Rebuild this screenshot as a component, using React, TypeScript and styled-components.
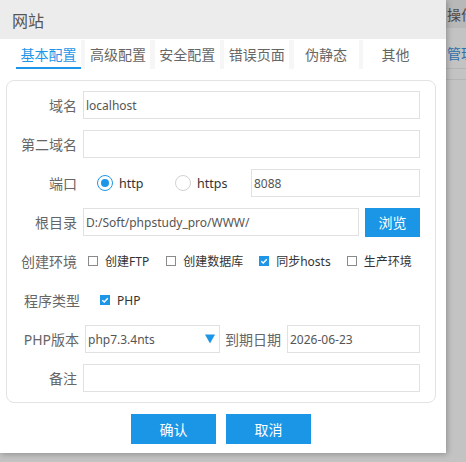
import React from "react";
import styled, { createGlobalStyle } from "styled-components";

const GlobalStyle = createGlobalStyle`
  html, body { margin: 0; padding: 0; }
  body {
    background: #c3c3c3;
    font-family: "Noto Sans", "Noto Sans CJK SC", sans-serif;
    -webkit-font-smoothing: antialiased;
  }
  * { box-sizing: border-box; }
`;

const Page = styled.div`
  position: relative;
  width: 466px;
  height: 462px;
  overflow: hidden;
  background: #c3c3c3;
`;

const BgHeader = styled.div`
  height: 28px;
  background: #b8b8b8;
  padding-left: 447px;
  display: flex;
  align-items: center;
  color: #4a4a4a;
  font-size: 14px;
  white-space: nowrap;
`;

const BgRow = styled.div<{ $h: number }>`
  height: ${(p) => p.$h}px;
  padding-left: 447px;
  display: flex;
  align-items: center;
  padding-top: 10px;
  color: #2d6fae;
  font-size: 14px;
  white-space: nowrap;
  border-bottom: 1px solid #b4b4b4;
`;

const Dialog = styled.div`
  position: absolute;
  left: 0;
  top: 0;
  width: 446px;
  height: 453px;
  background: #fff;
  box-shadow: 1px 1px 6px rgba(0, 0, 0, 0.28);
  display: flex;
  flex-direction: column;
`;

const TitleBar = styled.div`
  height: 39px;
  background: #ececec;
  padding-left: 12px;
  display: flex;
  align-items: center;
  font-size: 16px;
  color: #555;
`;

const TabStrip = styled.div`
  padding: 1px 0 0 16px;
  display: flex;
`;

const TabList = styled.div`
  display: flex;
  gap: 4.4px;
  background: #f6f6f6;
`;

const Tab = styled.div<{ $active?: boolean }>`
  width: 65px;
  height: 29px;
  background: #fff;
  display: flex;
  align-items: center;
  justify-content: center;
  font-size: 14px;
  color: ${(p) => (p.$active ? "#1e96e8" : "#666")};
  border-bottom: 2px solid ${(p) => (p.$active ? "#1e96e8" : "transparent")};
  padding-top: 1px;
`;

const Fieldset = styled.div`
  margin: 11px 10px 0 6px;
  border: 1px solid #e3e3e3;
  border-radius: 8px;
  padding: 10px 15px 10px 0;
  display: flex;
  flex-direction: column;
  gap: 11px;
`;

const Row = styled.div`
  height: 28px;
  display: flex;
  align-items: center;
  gap: 6px;
`;

const Label = styled.div<{ $w?: number }>`
  width: ${(p) => p.$w ?? 70}px;
  flex: none;
  text-align: right;
  font-size: 14px;
  color: #666;
  white-space: nowrap;
`;

const Field = styled.div<{ $w?: number }>`
  height: 28px;
  ${(p) => (p.$w ? `width: ${p.$w}px; flex: none;` : "flex: 1;")}
  border: 1px solid #e1e1e1;
  padding: 0 2px;
  display: flex;
  align-items: center;
  font-size: 12px;
  color: #555;
  white-space: nowrap;
  position: relative;
`;

const Arrow = styled.svg`
  position: absolute;
  right: 4px;
  top: 8px;
`;

const BlueButton = styled.div<{ $w: number; $h: number }>`
  width: ${(p) => p.$w}px;
  height: ${(p) => p.$h}px;
  flex: none;
  background: #1b96e6;
  color: #fff;
  font-size: 14px;
  display: flex;
  align-items: center;
  justify-content: center;
`;

const Options = styled.div<{ $ml: number }>`
  display: flex;
  align-items: center;
  margin-left: ${(p) => p.$ml}px;
`;

const Option = styled.div<{ $ml?: number; $w?: number; $gap: number; $size: number }>`
  display: flex;
  align-items: center;
  gap: ${(p) => p.$gap}px;
  margin-left: ${(p) => p.$ml ?? 0}px;
  ${(p) => (p.$w ? `width: ${p.$w}px;` : "")}
  font-size: ${(p) => p.$size}px;
  color: #333;
  white-space: nowrap;
`;

const RadioCircle = styled.span<{ $on?: boolean }>`
  width: 16px;
  height: 16px;
  flex: none;
  border-radius: 50%;
  border: 1px solid ${(p) => (p.$on ? "#1e96e8" : "#d2d2d2")};
  display: flex;
  align-items: center;
  justify-content: center;
  &::after {
    content: "";
    width: 8px;
    height: 8px;
    border-radius: 50%;
    background: ${(p) => (p.$on ? "#1e96e8" : "transparent")};
  }
`;

const Box = styled.span<{ $on?: boolean }>`
  width: 10px;
  height: 10px;
  flex: none;
  border: 1px solid ${(p) => (p.$on ? "#1e96e8" : "#8a8a8a")};
  background: ${(p) => (p.$on ? "#1e96e8" : "#fff")};
  display: flex;
  align-items: center;
  justify-content: center;
`;

const Footer = styled.div`
  display: flex;
  justify-content: center;
  gap: 10px;
  margin-top: 11px;
  padding-right: 4px;
`;

const Check = ({ on }: { on?: boolean }) => (
  <Box $on={on}>
    {on && (
      <svg width="8" height="8" viewBox="0 0 8 8">
        <path d="M1.3 4.2 L3.2 6 L6.8 2.2" stroke="#fff" strokeWidth="1.4" fill="none" />
      </svg>
    )}
  </Box>
);

const tabs = ["基本配置", "高级配置", "安全配置", "错误页面", "伪静态", "其他"];

export default function App() {
  return (
    <Page>
      <GlobalStyle />
      <BgHeader>操作</BgHeader>
      <BgRow $h={41}>管理</BgRow>
      <BgRow $h={9} />
      <Dialog>
        <TitleBar>网站</TitleBar>
        <TabStrip>
          <TabList>
            {tabs.map((t, i) => (
              <Tab key={t} $active={i === 0}>
                {t}
              </Tab>
            ))}
          </TabList>
        </TabStrip>
        <Fieldset>
          <Row>
            <Label>域名</Label>
            <Field>localhost</Field>
          </Row>
          <Row>
            <Label>第二域名</Label>
            <Field />
          </Row>
          <Row>
            <Label>端口</Label>
            <Options $ml={14}>
              <Option $w={78} $gap={6} $size={12.5}>
                <RadioCircle $on />
                http
              </Option>
              <Option $gap={6} $size={12.5}>
                <RadioCircle />
                https
              </Option>
            </Options>
            <Field $w={169} style={{ marginLeft: "auto" }}>8088</Field>
          </Row>
          <Row>
            <Label>根目录</Label>
            <Field>D:/Soft/phpstudy_pro/WWW/</Field>
            <BlueButton $w={55} $h={29}>浏览</BlueButton>
          </Row>
          <Row>
            <Label>创建环境</Label>
            <Options $ml={5}>
              <Option $gap={7} $size={12}>
                <Check />
                创建FTP
              </Option>
              <Option $ml={17} $gap={7} $size={12}>
                <Check />
                创建数据库
              </Option>
              <Option $ml={16} $gap={7} $size={12}>
                <Check on />
                同步hosts
              </Option>
              <Option $ml={16} $gap={7} $size={12}>
                <Check />
                生产环境
              </Option>
            </Options>
          </Row>
          <Row>
            <Label $w={73}>程序类型</Label>
            <Options $ml={14}>
              <Option $gap={7} $size={12}>
                <Check on />
                PHP
              </Option>
            </Options>
          </Row>
          <Row>
            <Label $w={72}>PHP版本</Label>
            <Field $w={135}>
              php7.3.4nts
              <Arrow width="10" height="10" viewBox="0 0 10 10">
                <path d="M0 0.5 H10 L5 9.5 Z" fill="#1e96e8" />
              </Arrow>
            </Field>
            <Label $w={56} style={{ marginLeft: -1 }}>到期日期</Label>
            <Field>2026-06-23</Field>
          </Row>
          <Row>
            <Label>备注</Label>
            <Field />
          </Row>
        </Fieldset>
        <Footer>
          <BlueButton $w={85} $h={30}>确认</BlueButton>
          <BlueButton $w={85} $h={30}>取消</BlueButton>
        </Footer>
      </Dialog>
    </Page>
  );
}
